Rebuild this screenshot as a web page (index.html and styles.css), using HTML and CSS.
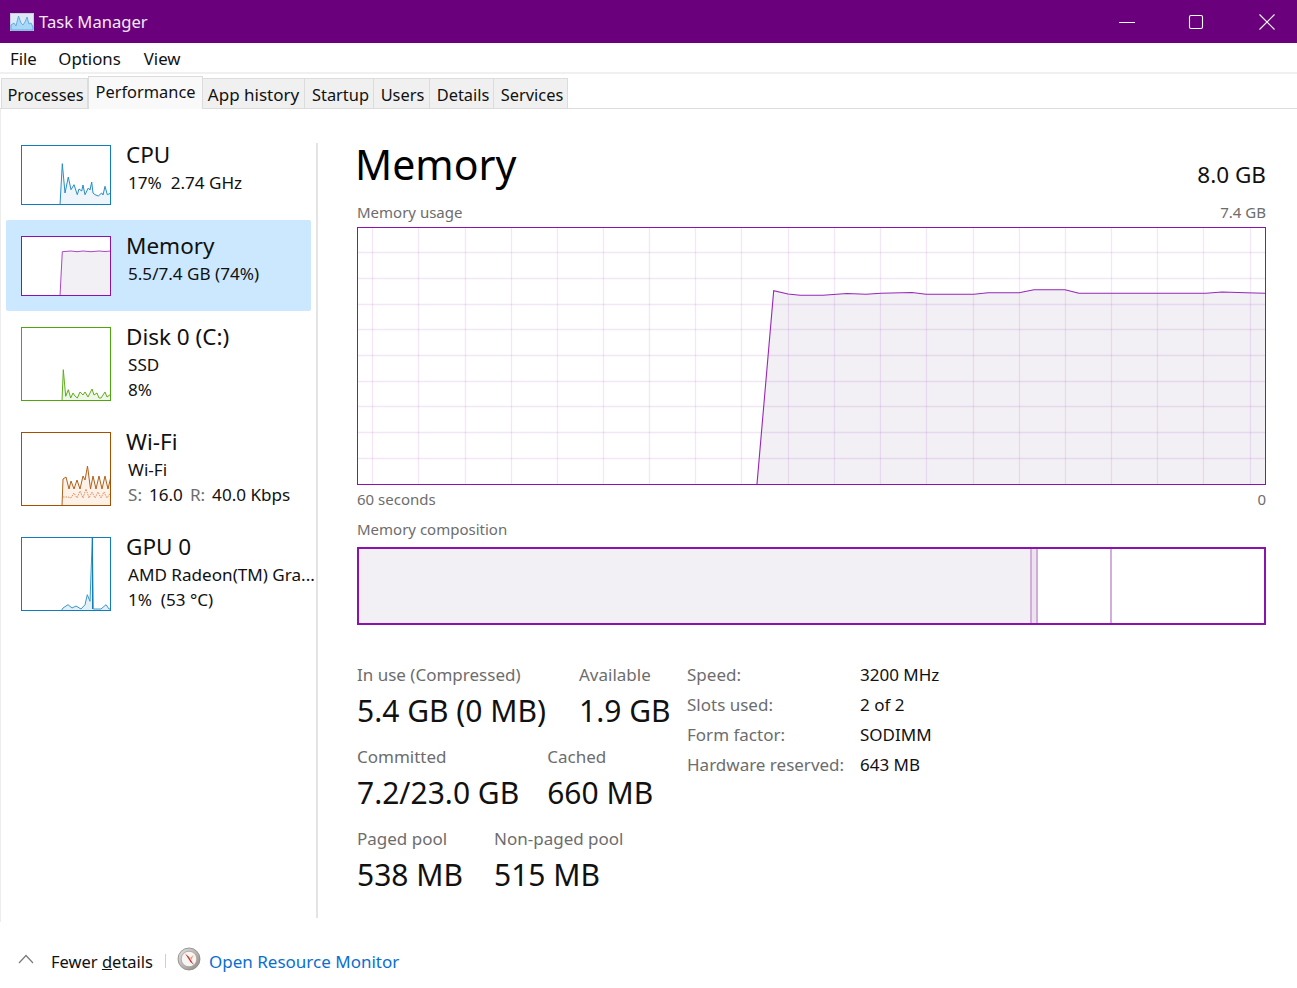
FILE: index.html
```html
<!DOCTYPE html>
<html lang="en">
<head>
<meta charset="utf-8">
<title>Task Manager</title>
<link rel="stylesheet" href="styles.css">
</head>
<body>
<div class="app">
  <header class="titlebar">
    <svg class="app-icon" viewBox="0 0 24 18" width="24" height="18"><rect x="0.5" y="0.5" width="23" height="17" fill="#dfe9f5" stroke="#c4cfdc"/><path d="M1 16V12L4 10L6 13L8.5 3L11 10L13 12L15 9L17 4L19 11L21 10L23 14V17H1Z" fill="#a9d8f6" stroke="#55a6e2" stroke-width="0.9"/></svg>
    <span class="app-name">Task Manager</span>
    <div class="win-controls">
      <svg width="16" height="16" viewBox="0 0 16 16" class="ctl-min"><path d="M0 8.5H16" stroke="#fff" fill="none"/></svg>
      <svg width="16" height="16" viewBox="0 0 16 16" class="ctl-max"><rect x="1.5" y="1.5" width="13" height="13" rx="1.5" stroke="#fff" fill="none" stroke-width="1.1"/></svg>
      <svg width="16" height="16" viewBox="0 0 16 16" class="ctl-close"><path d="M0.5 0.5L15.5 15.5M15.5 0.5L0.5 15.5" stroke="#fff" fill="none" stroke-width="1.1"/></svg>
    </div>
  </header>
  <nav class="menubar"><span>File</span><span>Options</span><span class="menu-view">View</span></nav>
  <div class="tabs">
    <div class="tab t-proc">Processes</div>
    <div class="tab active t-perf">Performance</div>
    <div class="tab t-app">App history</div>
    <div class="tab t-start">Startup</div>
    <div class="tab t-users">Users</div>
    <div class="tab t-det">Details</div>
    <div class="tab t-serv">Services</div>
  </div>
  <div class="content">
    <aside class="sidebar">
      <div class="item">
        <svg class="thumb short" viewBox="0 0 90 60"><path d="M39 60L41.3 18.7L44 48L47.3 32L50 44.7L53 39.7L56.3 49.7L58 44L60.7 46L62 40L64 49.7L67.3 43L69 45L70.7 37L72 48L74 49.7L77.3 51L80.7 48L82 50L84 41.3L86.3 49.7L90 48V60Z" fill="#eef6fb" stroke="#2a8cc4" stroke-width="1"/><rect x="0.5" y="0.5" width="89" height="59" fill="none" stroke="#117dbb"/></svg>
        <div class="info"><div class="name">CPU</div><div class="sub">17%&nbsp; 2.74 GHz</div></div>
      </div>
      <div class="item selected">
        <svg class="thumb short" viewBox="0 0 90 60"><rect width="90" height="60" fill="#fff"/><path d="M39 60L41.3 15.7L50 15L56 15.7L62 15L70 15.7L78 15L84 15.5L90 15V60Z" fill="#f2f0f4" stroke="#a848c4" stroke-width="1"/><rect x="0.5" y="0.5" width="89" height="59" fill="none" stroke="#8b12ae"/></svg>
        <div class="info"><div class="name">Memory</div><div class="sub">5.5/7.4 GB (74%)</div></div>
      </div>
      <div class="item">
        <svg class="thumb" viewBox="0 0 90 74"><path d="M41 74L42.3 42.7L44.7 69.3L47.3 62.7L49.7 71L52 66L54 69L56.3 71L59 65L62 68L64 65L67 70L71 62L73 68L76 66L78 71L80 71L84 65L86 70L90 67V74Z" fill="#eff7e8" stroke="#5fae1e" stroke-width="1"/><rect x="0.5" y="0.5" width="89" height="73" fill="none" stroke="#4da60c"/></svg>
        <div class="info"><div class="name">Disk 0 (C:)</div><div class="sub">SSD</div><div class="sub">8%</div></div>
      </div>
      <div class="item">
        <svg class="thumb" viewBox="0 0 90 74"><path d="M41 74L42 47L45 45L48 57L50 49L53 57L56 48L59 57L62 44L64 48L66.5 34L69.5 57L72 44L75 57L78 44L81 57L84 44L87 57L90 44V74Z" fill="#fdf1e8" stroke="#b0621c" stroke-width="1"/><path d="M42 65L47 65L50 66L53 61L56 66L59 59L62 66L65 57L68 66L71 60L74 66L77 60L80 66L83 60L86 66L90 60" fill="none" stroke="#e08d5c" stroke-width="1" stroke-dasharray="1.5 1"/><rect x="0.5" y="0.5" width="89" height="73" fill="none" stroke="#a74f01"/></svg>
        <div class="info"><div class="name">Wi-Fi</div><div class="sub">Wi-Fi</div><div class="sub"><span class="dim">S:</span><span class="num">16.0</span><span class="dim">R:</span><span class="num">40.0 Kbps</span></div></div>
      </div>
      <div class="item">
        <svg class="thumb" viewBox="0 0 90 74"><path d="M40 74L42 71L47 67.7L51 71L55 69L60 72L64 67.7L66.3 57.7L69 64.3L71.3 1L72.3 72L80 72L85 67.7L88 72L90 72V74Z" fill="#e3f0f8" stroke="#3c96cc" stroke-width="1"/><path d="M71.5 1V72" stroke="#117dbb" stroke-width="1"/><rect x="0.5" y="0.5" width="89" height="73" fill="none" stroke="#117dbb"/></svg>
        <div class="info"><div class="name">GPU 0</div><div class="sub">AMD Radeon(TM) Gra...</div><div class="sub">1%&nbsp; (53 °C)</div></div>
      </div>
    </aside>
    <div class="divider"></div>
    <main class="main">
      <div class="head"><h1>Memory</h1><div class="total">8.0 GB</div></div>
      <div class="cap cap-usage"><span>Memory usage</span><span>7.4 GB</span></div>
      <svg class="graph" width="909" height="258" viewBox="0 0 909 258">
        <rect width="909" height="258" fill="#fff"/>
        <path d="M400 257L416.7 63.7L431 67L443 68.3L466 68.3L490 66.5L509 67.3L524 66.3L555 65.5L569 67.3L617 67.3L631 65.7L662 65.7L677 62.7L708 62.7L722 66.3L849 66.3L865 65L889 65.7L908 66.3V257Z" fill="#f2f0f4"/>
        <g stroke="#8b12ae" stroke-opacity="0.1" stroke-width="1.3">
          <path d="M15.5 0V258M61.5 0V258M108.5 0V258M154.5 0V258M200.5 0V258M246.5 0V258M292.5 0V258M338.5 0V258M384.5 0V258M431.5 0V258M477.5 0V258M523.5 0V258M569.5 0V258M616.5 0V258M662.5 0V258M708.5 0V258M754.5 0V258M800.5 0V258M846.5 0V258M893.5 0V258"/>
          <path d="M0 25.5H909M0 51.5H909M0 77.5H909M0 102.5H909M0 128.5H909M0 154.5H909M0 179.5H909M0 205.5H909M0 231.5H909"/>
        </g>
        <path d="M400 257L416.7 63.7L431 67L443 68.3L466 68.3L490 66.5L509 67.3L524 66.3L555 65.5L569 67.3L617 67.3L631 65.7L662 65.7L677 62.7L708 62.7L722 66.3L849 66.3L865 65L889 65.7L908 66.3" fill="none" stroke="#9528b8" stroke-width="1.1"/>
        <rect x="0.5" y="0.5" width="908" height="257" fill="none" stroke="#8b12ae"/>
      </svg>
      <div class="cap cap-time"><span>60 seconds</span><span>0</span></div>
      <div class="cap cap-comp"><span>Memory composition</span></div>
      <div class="composition">
        <div class="seg seg-use"></div>
        <div class="seg seg-mod"></div>
        <div class="seg seg-standby"></div>
        <div class="seg seg-free"></div>
      </div>
      <div class="stats">
        <div class="stat-col">
          <div class="stat-row row-a">
            <div><div class="label">In use (Compressed)</div><div class="value">5.4 GB (0 MB)</div></div>
            <div><div class="label">Available</div><div class="value">1.9 GB</div></div>
          </div>
          <div class="stat-row row-b">
            <div><div class="label">Committed</div><div class="value">7.2/23.0 GB</div></div>
            <div><div class="label">Cached</div><div class="value">660 MB</div></div>
          </div>
          <div class="stat-row row-c">
            <div><div class="label">Paged pool</div><div class="value">538 MB</div></div>
            <div><div class="label">Non-paged pool</div><div class="value">515 MB</div></div>
          </div>
        </div>
        <dl class="specs">
          <dt>Speed:</dt><dd>3200 MHz</dd>
          <dt>Slots used:</dt><dd>2 of 2</dd>
          <dt>Form factor:</dt><dd>SODIMM</dd>
          <dt>Hardware reserved:</dt><dd>643 MB</dd>
        </dl>
      </div>
    </main>
  </div>
  <footer class="footer">
    <svg class="chevron" width="16" height="10" viewBox="0 0 16 10"><path d="M1 9L8 1.5L15 9" fill="none" stroke="#7a7a7a" stroke-width="1.2"/></svg>
    <span class="fewer">Fewer <u>d</u>etails</span>
    <span class="sep"></span>
    <svg class="monitor" width="24" height="24" viewBox="0 0 24 24"><defs><linearGradient id="ring" x1="0" y1="0" x2="1" y2="1"><stop offset="0" stop-color="#e6e4e2"/><stop offset="1" stop-color="#8d8886"/></linearGradient></defs><circle cx="12" cy="12" r="11" fill="url(#ring)" stroke="#8a8582" stroke-width="0.8"/><circle cx="12" cy="12" r="7.8" fill="#f6f5f3" stroke="#a09a96" stroke-width="0.7"/><path d="M8 6.5L13.5 15L17 18L11.5 9.5Z" fill="#cc2a26"/><path d="M16.5 8L13 11L14.5 13Z" fill="#eba263"/></svg>
    <span class="link">Open Resource Monitor</span>
  </footer>
</div>
</body>
</html>
```
FILE: styles.css
```css
* { box-sizing: border-box; }
html, body { margin: 0; padding: 0; height: 100%; background: #fff; overflow: hidden; }
body { font-family: "Noto Sans", "Open Sans", sans-serif; color: #111; font-size: 17px; }
.app { width: 1297px; height: 988px; display: flex; flex-direction: column; }

.titlebar { height: 43px; background: #6a007c; color: #f3e8f5; display: flex; align-items: center; padding-left: 10px; }
.app-icon { margin-right: 5px; margin-top: 1px; }
.app-name { font-size: 16.6px; }
.win-controls { margin-left: auto; display: flex; align-items: center; }
.ctl-min { margin-right: 53px; }
.ctl-max { margin-right: 55px; }
.ctl-close { margin-right: 22px; }

.menubar { height: 31px; display: flex; align-items: center; border-bottom: 2px solid #f0f0f0; padding: 2px 0 0 10px; gap: 21.5px; font-size: 16.8px; }
.menu-view { margin-left: 1.5px; }

.tabs { height: 35px; display: flex; align-items: flex-end; border-bottom: 1px solid #dcdcdc; padding-left: 1px; }
.tab { height: 31px; margin-bottom: -1px; background: #f0f0f0; border: 1px solid #dcdcdc; border-left: 0; display: flex; align-items: center; justify-content: center; font-size: 16.4px; padding-top: 2px; }
.tab.active { height: 33px; margin-bottom: -1px; background: #f9f9f9; border-left: 1px solid #dcdcdc; border-bottom: 0; padding-top: 0; padding-bottom: 3px; }
.t-proc { width: 87px; border-left: 1px solid #dcdcdc; padding-left: 2px; }
.t-perf { width: 115px; }
.t-app { width: 102px; font-size: 17px; }
.t-start { width: 69px; padding-left: 3px; }
.t-users { width: 56px; padding-left: 2px; }
.t-det { width: 64px; padding-left: 3px; }
.t-serv { width: 74px; padding-left: 3px; }

.content { height: 813px; display: flex; }
.sidebar { width: 316px; padding: 20px 0 0 6px; border-left: 1px solid #ececec; }
.item { width: 305px; display: flex; padding: 16px 0 15px 15px; gap: 15px; margin-left: -1px; white-space: nowrap; }
.item.selected { background: #cce8ff; border-radius: 2px; }
.thumb { width: 90px; height: 74px; flex: none; display: block; }
.thumb.short { height: 60px; }
.info { margin: -4px 0 -4px; }
.name { font-size: 22.5px; line-height: 28px; margin-bottom: 1px; }
.sub { font-size: 17.1px; line-height: 25px; margin-left: 2px; }
.dim { color: #6d6d6d; }
.num { margin: 0 7px 0 7px; }

.divider { width: 2px; margin: 34px 0 4px; background: #e4e4e4; flex: none; }
.main { width: 948px; padding: 30px 0 0 39px; }
.head { height: 54px; display: flex; justify-content: space-between; align-items: center; }
h1 { margin: -2px 0 2px -2px; font-size: 41px; font-weight: 400; line-height: 54px; color: #000; }
.total { font-size: 22.5px; margin-top: 16px; color: #111; }
.cap { display: flex; justify-content: space-between; font-size: 15px; line-height: 20px; color: #6d6d6d; }
.cap-usage { margin-top: 9px; }
.graph { display: block; margin-top: 5px; }
.cap-time { margin-top: 4px; }
.cap-comp { margin-top: 10px; }

.composition { width: 909px; height: 78px; margin-top: 8px; border: 2px solid #8b12ae; display: flex; background: #fff; }
.seg { height: 100%; flex: none; border-right: 2px solid #d0aed9; }
.seg-use { width: 673px; background: #f2f0f4; }
.seg-mod { width: 6px; background: #ece4ef; }
.seg-standby { width: 74px; }
.seg-free { flex: 1; border-right: 0; }

.stats { display: flex; margin-top: 34px; }
.stat-col { width: 330px; padding-top: 4px; display: flex; flex-direction: column; gap: 12px; }
.stat-row { display: flex; white-space: nowrap; }
.row-a { gap: 33px; }
.row-b { gap: 28px; }
.row-c { gap: 31px; }
.label { font-size: 17px; line-height: 24px; color: #6d6d6d; }
.value { font-size: 30px; line-height: 44px; margin-top: 2px; color: #111; }
.specs { margin: 0; display: grid; grid-template-columns: 173px auto; grid-auto-rows: 30px; align-items: center; font-size: 17px; }
.specs dt { color: #6d6d6d; }
.specs dd { margin: 0; }

.footer { flex: 1; display: flex; align-items: center; padding: 12px 0 0 18px; font-size: 17px; }
.chevron { margin-right: 17px; margin-top: -4px; }
.fewer { color: #111; font-size: 16.5px; }
.sep { width: 1px; height: 14px; background: #cfcfcf; margin: 0 11.5px; }
.monitor { margin-right: 8px; margin-top: -4px; }
.link { color: #0a6ed1; }
```
